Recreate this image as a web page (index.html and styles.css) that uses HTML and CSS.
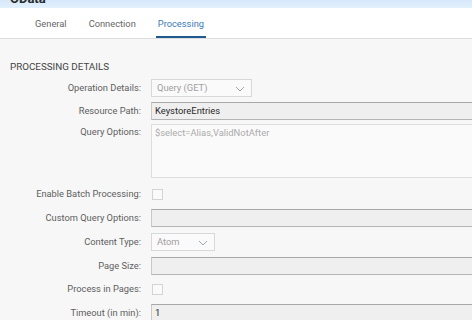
FILE: index.html
```html
<!DOCTYPE html>
<html>
<head>
<meta charset="utf-8">
<link rel="stylesheet" href="styles.css">
</head>
<body>
<div class="page">
  <div class="titlebar"><span class="title">OData</span></div>
  <div class="tabs">
    <div class="tab">General</div>
    <div class="tab">Connection</div>
    <div class="tab active">Processing</div>
  </div>
  <div class="content">
    <div class="section">PROCESSING DETAILS</div>
    <div class="form">
      <div class="row r1">
        <div class="label">Operation Details:</div>
        <div class="select sel-op">Query (GET)<svg class="chev" viewBox="0 0 10 6" width="10" height="6"><path d="M1 1l4 4 4-4" fill="none" stroke="#9aa7b4" stroke-width="1"/></svg></div>
      </div>
      <div class="row r2">
        <div class="label">Resource Path:</div>
        <div class="input filled">KeystoreEntries</div>
      </div>
      <div class="row r3 top">
        <div class="label">Query Options:</div>
        <div class="textarea">$select=Alias,ValidNotAfter</div>
      </div>
      <div class="row r4">
        <div class="label">Enable Batch Processing:</div>
        <div class="check"></div>
      </div>
      <div class="row">
        <div class="label">Custom Query Options:</div>
        <div class="input"></div>
      </div>
      <div class="row">
        <div class="label">Content Type:</div>
        <div class="select sel-ct">Atom<svg class="chev" viewBox="0 0 10 6" width="10" height="6"><path d="M1 1l4 4 4-4" fill="none" stroke="#9aa7b4" stroke-width="1"/></svg></div>
      </div>
      <div class="row">
        <div class="label">Page Size:</div>
        <div class="input"></div>
      </div>
      <div class="row r8">
        <div class="label">Process in Pages:</div>
        <div class="check"></div>
      </div>
      <div class="row">
        <div class="label">Timeout (in min):</div>
        <div class="input filled">1</div>
      </div>
    </div>
  </div>
</div>
</body>
</html>
```
FILE: styles.css
```css
html, body {
  margin: 0;
  padding: 0;
  background: #ffffff;
}
body {
  font-family: Roboto, "Liberation Sans", Arial, sans-serif;
  width: 474px;
  height: 320px;
  overflow: hidden;
}
.page {
  width: 472px;
  height: 320px;
  overflow: hidden;
  background: #f7f7f7;
}
.titlebar {
  height: 8px;
  background: linear-gradient(#d6e8fa, #e3f0fc);
  position: relative;
  overflow: hidden;
}
.title {
  position: absolute;
  left: 10px;
  top: -9px;
  font-weight: bold;
  font-size: 13px;
  color: #2a2a2a;
}
.tabs {
  height: 31px;
  box-sizing: border-box;
  background: #ffffff;
  border-bottom: 1px solid #dcdcdc;
  display: flex;
  padding-left: 34px;
  gap: 20px;
}
.tab {
  font-size: 9.3px;
  color: #666;
  padding: 10px 1px 0;
  box-sizing: border-box;
  height: 30px;
}
.tab.active {
  color: #3b7ab8;
  border-bottom: 2px solid #1e5a8e;
  padding: 10px 2px 0;
  margin-left: -1px;
}
.content {
  padding: 22px 0 0 10px;
}
.section {
  font-size: 9.8px;
  color: #444;
  height: 12px;
  line-height: 12px;
}
.form {
  margin-top: 6px;
  margin-left: -10px;
  display: flex;
  flex-direction: column;
}
.row {
  display: flex;
  align-items: center;
  gap: 10px;
  margin-top: 6px;
}
.row.top {
  align-items: flex-start;
}
.r1 { margin-top: 0; }
.r2 { margin-top: 5px; }
.r3 { margin-top: 4px; }
.r4 { margin-top: 7px; }
.r8 { margin-top: 5px; }
.label {
  width: 141px;
  flex: none;
  font-size: 9.3px;
  color: #5e5e5e;
  text-align: right;
  height: 18px;
  line-height: 18px;
  white-space: nowrap;
}
.row.top .label {
  line-height: 16px;
}
.select {
  height: 18px;
  box-sizing: border-box;
  border: 1px solid #d8d8d8;
  background: #fafafa;
  font-size: 9.4px;
  color: #a0a0a0;
  line-height: 16px;
  padding-left: 5px;
  position: relative;
}
.sel-op { width: 101px; }
.sel-ct { width: 64px; }
.chev {
  position: absolute;
  right: 6px;
  top: 6px;
}
.input {
  width: 340px;
  flex: none;
  height: 18px;
  box-sizing: border-box;
  background: #efefef;
  border: 1px solid #c8c8c8;
  border-top: 1px solid #a8a8a8;
  border-bottom: 1px solid #b4b4b4;
  font-size: 9.4px;
  line-height: 16px;
  color: #2a2a2a;
  padding-left: 3px;
}
.textarea {
  width: 340px;
  flex: none;
  height: 54px;
  box-sizing: border-box;
  background: #fafafa;
  border: 1px solid #dedede;
  font-size: 9.4px;
  color: #aaa;
  padding: 2px 3px;
  line-height: 12px;
}
.check {
  width: 11px;
  height: 11px;
  box-sizing: border-box;
  border: 1px solid #d4d4d4;
  background: #fafafa;
  margin-left: 1px;
}
```
